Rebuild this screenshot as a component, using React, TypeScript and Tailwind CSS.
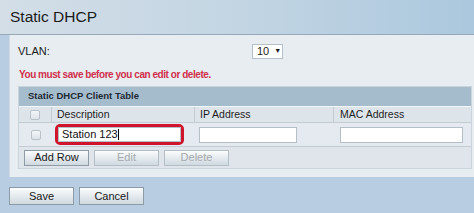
import React from 'react';

const Btn: React.FC<{ label: string; disabled?: boolean; className?: string }> = ({ label, disabled, className }) => (
  <button
    className={`flex items-center justify-center border bg-gradient-to-b from-[#fbfcfd] to-[#cfd9e0] text-[11px] ${
      disabled ? 'text-[#a4a9ad] border-[#b4bec5]' : 'text-[#1a1a1a] border-[#8d9ba6]'
    } ${className ?? ''}`}
  >
    {label}
  </button>
);

const Check: React.FC = () => (
  <span className="block w-[10px] h-[10px] rounded-[2px] border border-[#b9c2c9] bg-gradient-to-b from-[#f4f6f8] to-[#dde3e8]" />
);

const App: React.FC = () => {
  return (
    <div
      className="relative w-[474px] h-[213px] overflow-hidden bg-[#b8cde1]"
      style={{ fontFamily: '"Liberation Sans", Arial, sans-serif' }}
    >
      {/* Title bar */}
      <div className="h-[35px] bg-gradient-to-r from-[#d3dee7] via-[#c3d5e3] to-[#abc8de] border-b border-[#97a9b8] pl-[10px] pt-[8px]">
        <h1 className="text-[15.5px] leading-[18px] text-[#1b1b1b]">Static DHCP</h1>
      </div>

      {/* Panel */}
      <div className="ml-[9px] h-[142px] bg-[#e7edf1] border-l border-[#d0dbe3] pl-[8px] pr-[2px]">
        <div className="flex items-center h-[27px] pt-[6px]">
          <span className="w-[234px] text-[11px] text-[#1b1b1b]">VLAN:</span>
          <span className="flex items-center gap-[5px] h-[15px] w-[31px] pl-[4px] bg-white border border-[#b5bfc7] text-[11px] text-[#1b1b1b]">
            10
            <span className="text-[7px]">▼</span>
          </span>
        </div>
        <div className="h-[24px] flex items-center text-[10px] tracking-[-0.45px] font-bold text-[#d0304c] pl-[1px]">
          You must save before you can edit or delete.
        </div>

        {/* Table */}
        <div className="border border-[#c9d4dc] bg-[#e4eaef]">
          <div className="h-[19px] flex items-center pl-[9px] bg-[#a5bccd] text-[9.5px] font-bold text-[#1e2a33]">
            Static DHCP Client Table
          </div>
          <div className="flex h-[17px] bg-[#dde5eb] border-t border-[#f3f6f8] border-b border-b-[#c3ccd3] text-[10.5px] text-[#1e1e1e]">
            <div className="w-[33px] flex items-center justify-center border-r border-[#c3ccd3]">
              <Check />
            </div>
            <div className="w-[143px] flex items-center pl-[5px] border-r border-[#c3ccd3]">Description</div>
            <div className="w-[139px] flex items-center pl-[5px] border-r border-[#c3ccd3]">IP Address</div>
            <div className="flex-1 flex items-center pl-[6px]">MAC Address</div>
          </div>
          <div className="flex h-[24px] items-center bg-[#e4eaef] border-b border-[#c3ccd3]">
            <div className="w-[33px] flex items-center justify-center">
              <Check />
            </div>
            <div className="w-[143px] pl-[3px] flex items-center">
              <div className="rounded-[5px] border-[3px] border-[#d0142c]">
                <div className="w-[123px] h-[15px] bg-white border border-[#b5bfc7] flex items-center pl-[3px] text-[11px] text-[#111]">
                  Station 123<span className="inline-block w-px h-[11px] bg-black" />
                </div>
              </div>
            </div>
            <div className="w-[139px] pl-[4px] flex items-center">
              <div className="w-[98px] h-[16px] bg-white border border-[#b5bfc7]" />
            </div>
            <div className="flex-1 pl-[6px] flex items-center">
              <div className="w-[123px] h-[16px] bg-white border border-[#b5bfc7]" />
            </div>
          </div>
          <div className="flex items-center gap-[5px] h-[21px] pl-[5px] bg-[#dfe5ea]">
            <Btn label="Add Row" className="w-[65px] h-[16px]" />
            <Btn label="Edit" disabled className="w-[65px] h-[16px]" />
            <Btn label="Delete" disabled className="w-[65px] h-[16px]" />
          </div>
        </div>
      </div>

      {/* Footer buttons */}
      <div className="flex gap-[5px] pl-[9px] pt-[10px]">
        <Btn label="Save" className="w-[65px] h-[18px]" />
        <Btn label="Cancel" className="w-[65px] h-[18px]" />
      </div>
    </div>
  );
};

export default App;
